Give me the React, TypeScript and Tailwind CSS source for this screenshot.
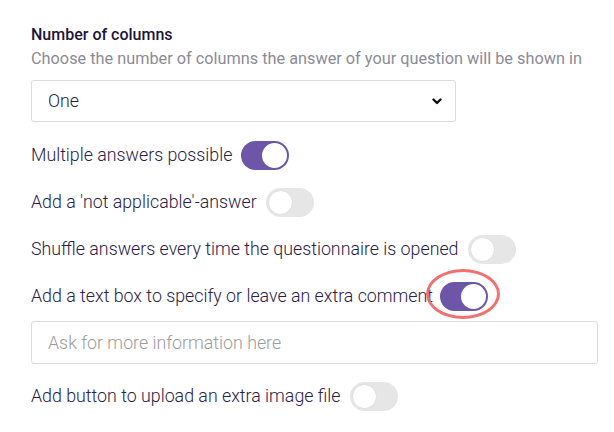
import { useState } from "react";

const FONT = { fontFamily: "Roboto, 'Liberation Sans', sans-serif" };

function Toggle({ on, onChange }: { on: boolean; onChange: () => void }) {
  return (
    <button
      type="button"
      onClick={onChange}
      className={
        on
          ? "flex h-[29px] w-[48px] shrink-0 items-center justify-end rounded-full bg-[#6d56a8] p-[2px]"
          : "flex h-[29px] w-[48px] shrink-0 items-center justify-start rounded-full bg-[#e6e6e6] p-[2px]"
      }
    >
      <span
        className={
          on
            ? "h-[25px] w-[25px] rounded-full bg-white"
            : "h-[25px] w-[25px] rounded-full border border-[#dedede] bg-white"
        }
      />
    </button>
  );
}

const OPTIONS = [
  { key: "multiple", label: "Multiple answers possible" },
  { key: "na", label: "Add a 'not applicable'-answer" },
  { key: "shuffle", label: "Shuffle answers every time the questionnaire is opened" },
];

export default function App() {
  const [state, setState] = useState<Record<string, boolean>>({
    multiple: true,
    na: false,
    shuffle: false,
    comment: true,
    image: false,
  });
  const flip = (k: string) => setState((s) => ({ ...s, [k]: !s[k] }));

  return (
    <div className="min-h-[432px] w-[614px] bg-white pl-[31px] pr-[16px] pt-[25px]" style={FONT}>
      <h3 className="text-[16px] font-medium leading-[20px] text-[#1e1638]">Number of columns</h3>
      <p className="mt-[3px] text-[16.3px] leading-[22px] text-[#8c8b96]">
        Choose the number of columns the answer of your question will be shown in
      </p>

      <div className="mt-[10px] flex h-[42px] w-[425px] items-center justify-between rounded-[3px] border border-[#dcdcdc] pl-[16px] pr-[13px]">
        <span className="text-[17.8px] font-light text-[#241b40]">One</span>
        <svg width="10" height="7" viewBox="0 0 10 7" fill="none">
          <path d="M1.5 1.5 5 5l3.5-3.5" stroke="#111" strokeWidth="2.4" strokeLinecap="round" strokeLinejoin="round" />
        </svg>
      </div>

      <div className="mt-[19px] flex flex-col gap-[18px]">
        {OPTIONS.map((o) => (
          <div key={o.key} className="flex h-[29px] items-center gap-[9px]">
            <span className="text-[17.8px] font-light text-[#2a2046]">{o.label}</span>
            <Toggle on={state[o.key]} onChange={() => flip(o.key)} />
          </div>
        ))}

        <div className="flex h-[29px] items-center gap-[7px]">
          <span className="text-[17.8px] font-light text-[#2a2046]">Add a text box to specify or leave an extra comment</span>
          <div className="relative">
            <Toggle on={state.comment} onChange={() => flip("comment")} />
            <span className="pointer-events-none absolute -bottom-[8px] -left-[14px] -right-[12px] -top-[13px] rounded-[50%] border-[3px] border-[#f27070]" />
          </div>
        </div>
      </div>

      <input
        placeholder="Ask for more information here"
        className="mt-[10px] h-[43px] w-[567px] rounded-[3px] border border-[#dcdcdc] px-[16px] text-[17.8px] font-light text-[#2a2046] outline-none placeholder:text-[#9b9b9b]"
        style={FONT}
      />

      <div className="mt-[18px] flex h-[29px] items-center gap-[9px]">
        <span className="text-[17.8px] font-light text-[#2a2046]">Add button to upload an extra image file</span>
        <Toggle on={state.image} onChange={() => flip("image")} />
      </div>
    </div>
  );
}
